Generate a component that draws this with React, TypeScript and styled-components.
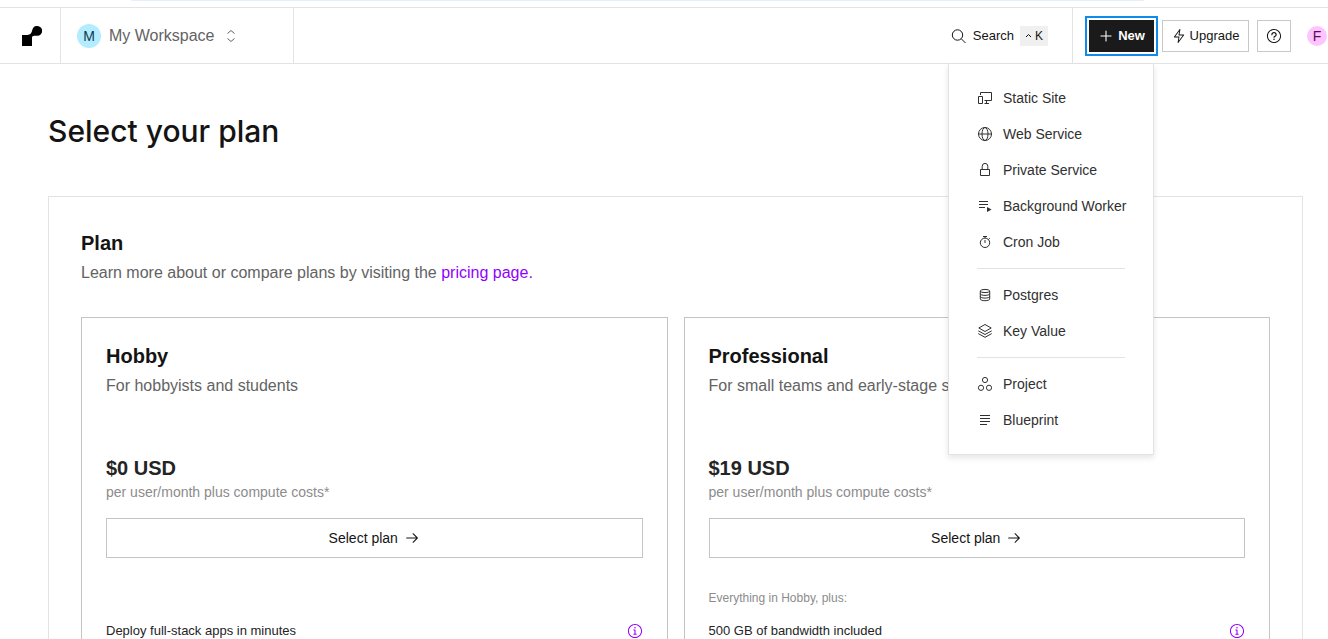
import React from "react";
import styled, { createGlobalStyle } from "styled-components";
import {
  RxLightningBolt,
  RxQuestionMarkCircled,
  RxPlus,
  RxArrowRight,
  RxInfoCircled,
} from "react-icons/rx";

const GlobalStyle = createGlobalStyle`
  *, *::before, *::after { box-sizing: border-box; }
  body {
    margin: 0;
    background: #fff;
    color: #141414;
    font-family: "Liberation Sans", Arial, sans-serif;
    font-size: 14px;
    line-height: 20px;
  }
  h1, h2, h3, p, ul { margin: 0; padding: 0; }
  button { font: inherit; color: inherit; cursor: pointer; }
  svg { display: block; flex: none; }
`;

const Shell = styled.div`
  display: flex;
  flex-direction: column;
  height: 100vh;
  overflow: hidden;
`;

const Notice = styled.div`
  height: 7px;
  flex: none;
  padding: 0 184px 0 131px;

  &::before {
    content: "";
    display: block;
    height: 1px;
    background: #e6f0fc;
    border-radius: 0 0 4px 4px;
  }
`;

const Header = styled.header`
  display: flex;
  flex: none;
  height: 57px;
  border-top: 1px solid #e3e3e3;
  border-bottom: 1px solid #e3e3e3;
`;

const LogoLink = styled.a`
  display: flex;
  align-items: center;
  width: 61px;
  padding-left: 22px;
  border-right: 1px solid #e3e3e3;
  color: #000;
`;

const WorkspaceButton = styled.button`
  display: flex;
  align-items: center;
  gap: 8px;
  width: 233px;
  padding: 0 16px;
  border: 0;
  border-right: 1px solid #e3e3e3;
  background: none;
  color: #636363;
  font-size: 16px;
`;

const Avatar = styled.span<{ $size: number; $bg: string; $fg: string }>`
  display: flex;
  flex: none;
  align-items: center;
  justify-content: center;
  width: ${(p) => p.$size}px;
  height: ${(p) => p.$size}px;
  border-radius: 50%;
  background: ${(p) => p.$bg};
  color: ${(p) => p.$fg};
  font-size: 14px;
`;

const SearchButton = styled.button`
  display: flex;
  align-items: center;
  gap: 6px;
  margin-left: auto;
  padding: 0 24px 0 16px;
  border: 0;
  border-right: 1px solid #e3e3e3;
  background: none;
  font-size: 13px;
`;

const Kbd = styled.kbd`
  display: flex;
  align-items: center;
  justify-content: space-between;
  width: 28px;
  height: 20px;
  padding: 0 5px;
  background: #f0f0f0;
  font-family: inherit;
  font-size: 12px;
`;

const Actions = styled.div`
  display: flex;
  align-items: center;
  gap: 8px;
  padding: 0 1px 0 16px;
`;

const MenuAnchor = styled.div`
  position: relative;
`;

const ActionButton = styled.button<{ $primary?: boolean; $width: number }>`
  display: flex;
  align-items: center;
  justify-content: center;
  gap: 4px;
  width: ${(p) => p.$width}px;
  height: 32px;
  padding: 0;
  border: 1px solid ${(p) => (p.$primary ? "#1a1a1a" : "#c9c9c9")};
  background: ${(p) => (p.$primary ? "#1a1a1a" : "#fff")};
  color: ${(p) => (p.$primary ? "#fff" : "#141414")};
  font-size: 13px;
  font-weight: ${(p) => (p.$primary ? 700 : 400)};
  outline: ${(p) => (p.$primary ? "2px solid #0d8ce9" : "none")};
  outline-offset: 2px;
`;

const AccountButton = styled.button`
  margin-left: 8px;
  padding: 0;
  border: 0;
  background: none;
`;

const Menu = styled.div`
  position: absolute;
  top: 44px;
  right: 0;
  z-index: 1;
  width: 206px;
  padding: 16px 28px;
  border: 1px solid #e3e3e3;
  border-top: 0;
  background: #fff;
  box-shadow: 0 3px 6px rgba(0, 0, 0, 0.1);
`;

const MenuItem = styled.a`
  display: flex;
  align-items: center;
  gap: 10px;
  height: 36px;
  color: #303030;
  text-decoration: none;
  white-space: nowrap;
`;

const MenuDivider = styled.hr`
  height: 1px;
  margin: 8px 0;
  border: 0;
  background: #e3e3e3;
`;

const Main = styled.main`
  flex: 1;
  min-height: 0;
  overflow-y: auto;
  scrollbar-width: none;
  padding: 45px 25px 48px 48px;
`;

const PageTitle = styled.h1`
  font-family: Inter, "Liberation Sans", sans-serif;
  font-size: 30px;
  font-weight: 500;
  line-height: 44px;
`;

const Panel = styled.section`
  margin-top: 43px;
  padding: 32px;
  border: 1px solid #e3e3e3;
`;

const Heading = styled.h2`
  font-size: 20px;
  font-weight: 700;
  line-height: 28px;
`;

const Description = styled.p`
  margin-top: 4px;
  color: #636363;
  font-size: 16px;
  line-height: 24px;
`;

const TextLink = styled.a`
  color: #9100ff;
  text-decoration: none;
`;

const Plans = styled.div`
  display: grid;
  grid-template-columns: 1fr 1fr;
  gap: 16px;
  margin-top: 32px;
`;

const PlanCard = styled.article`
  padding: 24px;
  border: 1px solid #c4c4c4;
`;

const Price = styled.p`
  margin-top: 56px;
  color: #242424;
  font-size: 20px;
  font-weight: 700;
  line-height: 28px;
`;

const PriceNote = styled.p`
  color: #8c8c8c;
`;

const SelectButton = styled.button`
  display: flex;
  align-items: center;
  justify-content: center;
  gap: 6px;
  width: 100%;
  height: 40px;
  margin-top: 16px;
  border: 1px solid #c4c4c4;
  background: #fff;
`;

const Includes = styled.p`
  height: 16px;
  margin-top: 32px;
  color: #8c8c8c;
  font-size: 12px;
  line-height: 16px;
`;

const Features = styled.ul`
  margin-top: 15px;
  list-style: none;
`;

const Feature = styled.li`
  display: flex;
  align-items: center;
  justify-content: space-between;
  height: 20px;
  color: #242424;
  font-size: 13px;
`;

const InfoButton = styled.button`
  padding: 0;
  border: 0;
  background: none;
  color: #9100ff;
`;

const Glyph = ({ children }: { children: React.ReactNode }) => (
  <svg width="16" height="16" viewBox="0 0 16 16" fill="none" stroke="currentColor" aria-hidden="true">
    {children}
  </svg>
);

const Logo = () => (
  <svg width="20" height="20" viewBox="0 0 20 20" fill="currentColor" aria-hidden="true">
    <path d="M15.4 0a4.9 4.9 0 0 0-5.1 4.1C9.6 7.300 8.400 9 5.300 9H0v11h10v-8.200c0-1.200.9-2 2.100-2h3.100A4.900 4.900 0 0 0 15.400 0Z" />
  </svg>
);

const Sorter = () => (
  <Glyph>
    <path d="M4.500 5.500 8 2.500l3.500 3M4.500 10.500l3.500 3 3.500-3" />
  </Glyph>
);

const SearchIcon = () => (
  <Glyph>
    <circle cx="6.500" cy="7" r="5.200" />
    <path d="m10.300 10.800 4.200 4.200" />
  </Glyph>
);

const StaticSiteIcon = () => (
  <Glyph>
    <path d="M3.500 5V2.500h11v8H7.500M1.500 6.500h4v7h-4zM9.500 10.500v3M7.500 13.500H12" />
  </Glyph>
);

const GlobeIcon = () => (
  <Glyph>
    <circle cx="8" cy="8" r="6.500" />
    <ellipse cx="8" cy="8" rx="3" ry="6.500" />
    <path d="M1.500 8h13" />
  </Glyph>
);

const LockIcon = () => (
  <Glyph>
    <path d="M3.500 7.500h9v6h-9zM5.200 7.500V4.200a2.800 2.800 0 0 1 5.600 0v3.300" />
  </Glyph>
);

const WorkerIcon = () => (
  <Glyph>
    <path d="M2 3.500h9M2 6.500h9M2 9.500h6" strokeWidth="1.200" />
    <path d="M10 9v5l4.500-2.500z" fill="currentColor" stroke="none" />
  </Glyph>
);

const TimerIcon = () => (
  <Glyph>
    <circle cx="8" cy="8.800" r="4.700" />
    <path d="M6 2.500h4M8 2.500V4M8 6v3M11.300 5.500l1.500-1.200" />
  </Glyph>
);

const DatabaseIcon = () => (
  <Glyph>
    <ellipse cx="8" cy="4" rx="4.700" ry="1.600" />
    <path d="M3.300 4v8c0 1 2 1.700 4.700 1.700s4.700-.7 4.700-1.700V4M3.300 6.700c0 1 2 1.700 4.700 1.700s4.700-.7 4.700-1.700M3.300 9.400c0 1 2 1.700 4.700 1.700s4.700-.7 4.700-1.700" />
  </Glyph>
);

const LayersIcon = () => (
  <Glyph>
    <path d="M8 1.500 14.200 5 8 8.500 1.800 5zM1.300 7.800 8 11.500l6.700-3.700M1.300 10.600 8 14.300l6.700-3.700" />
  </Glyph>
);

const ProjectIcon = () => (
  <Glyph>
    <circle cx="8" cy="4" r="2.600" />
    <circle cx="4" cy="11.800" r="2.600" />
    <circle cx="12" cy="11.800" r="2.600" />
  </Glyph>
);

const BlueprintIcon = () => (
  <Glyph>
    <path d="M3 3.500h10M3 6.500h10M3 9.500h10M3 12.500h7" strokeWidth="1.200" />
  </Glyph>
);

const menuGroups = [
  [
    { label: "Static Site", icon: <StaticSiteIcon /> },
    { label: "Web Service", icon: <GlobeIcon /> },
    { label: "Private Service", icon: <LockIcon /> },
    { label: "Background Worker", icon: <WorkerIcon /> },
    { label: "Cron Job", icon: <TimerIcon /> },
  ],
  [
    { label: "Postgres", icon: <DatabaseIcon /> },
    { label: "Key Value", icon: <LayersIcon /> },
  ],
  [
    { label: "Project", icon: <ProjectIcon /> },
    { label: "Blueprint", icon: <BlueprintIcon /> },
  ],
];

const plans = [
  {
    name: "Hobby",
    audience: "For hobbyists and students",
    price: "$0 USD",
    includes: "",
    features: ["Deploy full-stack apps in minutes"],
  },
  {
    name: "Professional",
    audience: "For small teams and early-stage startups",
    price: "$19 USD",
    includes: "Everything in Hobby, plus:",
    features: ["500 GB of bandwidth included"],
  },
];

export default function App() {
  return (
    <Shell>
      <GlobalStyle />
      <Notice />
      <Header>
        <LogoLink href="#" aria-label="Home">
          <Logo />
        </LogoLink>
        <WorkspaceButton>
          <Avatar $size={24} $bg="#b3ebff" $fg="#0b3a52">M</Avatar>
          My Workspace
          <Sorter />
        </WorkspaceButton>
        <SearchButton>
          <SearchIcon />
          Search
          <Kbd>
            <svg width="7" height="5" viewBox="0 0 7 5" fill="none" stroke="currentColor" aria-hidden="true">
              <path d="M1 4 3.500 1.500 6 4" />
            </svg>
            K
          </Kbd>
        </SearchButton>
        <Actions>
          <MenuAnchor>
            <ActionButton $primary $width={65} aria-expanded="true">
              <RxPlus size={16} />
              New
            </ActionButton>
            <Menu>
              {menuGroups.map((group, i) => (
                <React.Fragment key={i}>
                  {i > 0 && <MenuDivider />}
                  {group.map((item) => (
                    <MenuItem key={item.label} href="#">
                      {item.icon}
                      {item.label}
                    </MenuItem>
                  ))}
                </React.Fragment>
              ))}
            </Menu>
          </MenuAnchor>
          <ActionButton $width={87}>
            <RxLightningBolt size={14} />
            Upgrade
          </ActionButton>
          <ActionButton $width={34} aria-label="Help">
            <RxQuestionMarkCircled size={16} />
          </ActionButton>
          <AccountButton aria-label="Account">
            <Avatar $size={20} $bg="#ffc4ff" $fg="#5c0a5c">F</Avatar>
          </AccountButton>
        </Actions>
      </Header>
      <Main>
        <PageTitle>Select your plan</PageTitle>
        <Panel>
          <Heading>Plan</Heading>
          <Description>
            Learn more about or compare plans by visiting the <TextLink href="#">pricing page.</TextLink>
          </Description>
          <Plans>
            {plans.map((plan) => (
              <PlanCard key={plan.name}>
                <Heading as="h3">{plan.name}</Heading>
                <Description>{plan.audience}</Description>
                <Price>{plan.price}</Price>
                <PriceNote>per user/month plus compute costs*</PriceNote>
                <SelectButton>
                  Select plan
                  <RxArrowRight size={16} />
                </SelectButton>
                <Includes>{plan.includes}</Includes>
                <Features>
                  {plan.features.map((feature) => (
                    <Feature key={feature}>
                      {feature}
                      <InfoButton aria-label={"About: " + feature}>
                        <RxInfoCircled size={16} />
                      </InfoButton>
                    </Feature>
                  ))}
                </Features>
              </PlanCard>
            ))}
          </Plans>
        </Panel>
      </Main>
    </Shell>
  );
}
